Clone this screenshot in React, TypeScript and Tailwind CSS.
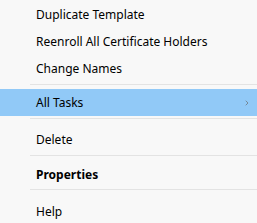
import { ChevronRight } from "lucide-react"

type Item = {
  label: string
  bold?: boolean
  active?: boolean
  submenu?: boolean
}

function Row({ item }: { item: Item }) {
  return (
    <div
      className={`flex h-[27px] items-center pl-[36px] pr-[6px] text-[12px] text-black ${
        item.active ? "bg-[#91c9f7]" : ""
      } ${item.bold ? "font-bold" : ""}`}
    >
      <span className="flex-1 leading-none">{item.label}</span>
      {item.submenu && <ChevronRight className="h-[8px] w-[8px] text-[#666]" strokeWidth={2} />}
    </div>
  )
}

function Sep({ className }: { className: string }) {
  return <div className={`ml-[30px] h-px bg-[#e3e3e3] ${className}`} />
}

export default function App() {
  return (
    <div
      className="h-[223px] w-full overflow-hidden bg-[#f8f8f8] pt-px"
      style={{ fontFamily: '"Noto Sans", "Liberation Sans", sans-serif' }}
    >
      <Row item={{ label: "Duplicate Template" }} />
      <Row item={{ label: "Reenroll All Certificate Holders" }} />
      <Row item={{ label: "Change Names" }} />
      <Sep className="mt-[2px] mb-[4px]" />
      <Row item={{ label: "All Tasks", active: true, submenu: true }} />
      <Sep className="mt-[2px] mb-[7px]" />
      <Row item={{ label: "Delete" }} />
      <Sep className="mt-[2px] mb-[5px]" />
      <Row item={{ label: "Properties", bold: true }} />
      <Sep className="mt-px mb-[8px]" />
      <Row item={{ label: "Help" }} />
    </div>
  )
}
